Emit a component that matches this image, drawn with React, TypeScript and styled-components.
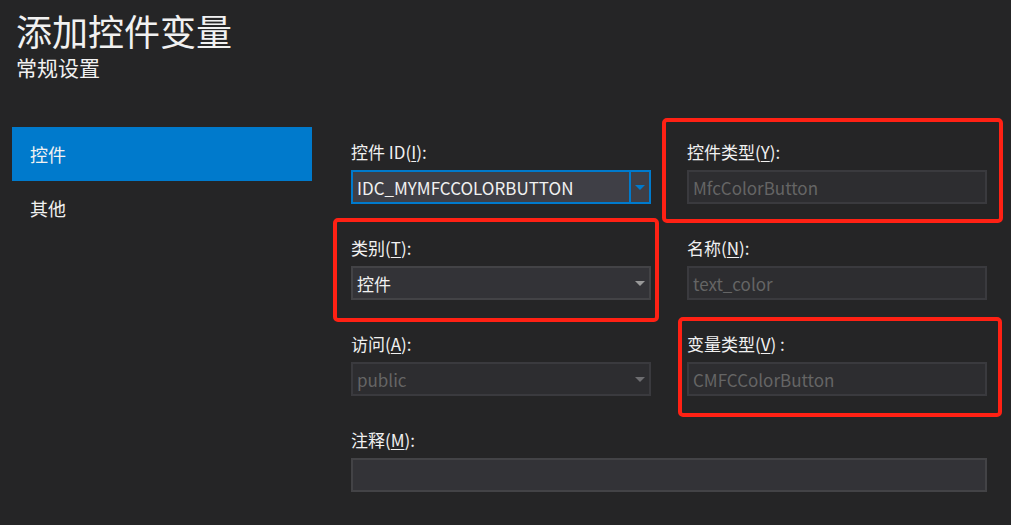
import styled, { createGlobalStyle } from 'styled-components';

const GlobalStyle = createGlobalStyle`
  html, body {
    margin: 0;
    padding: 0;
    background: #252526;
  }
  body {
    font-family: "Segoe UI", "Noto Sans CJK SC", sans-serif;
    color: #f1f1f1;
  }
`;

const Page = styled.div`
  position: relative;
  width: 1011px;
  height: 525px;
  overflow: hidden;
  background: #252526;
`;

const Header = styled.header`
  padding: 6px 0 0 16px;
`;

const Title = styled.h1`
  margin: 0;
  font-size: 36px;
  font-weight: 400;
  line-height: 48px;
  color: #f1f1f1;
`;

const Subtitle = styled.h2`
  margin: 0;
  font-size: 21px;
  font-weight: 400;
  line-height: 26px;
  color: #f1f1f1;
`;

const Body = styled.div`
  display: grid;
  grid-template-columns: 300px 636px;
  column-gap: 39px;
  padding: 47px 0 0 12px;
`;

const Nav = styled.nav`
  display: flex;
  flex-direction: column;
`;

const NavItem = styled.div<{ $active?: boolean }>`
  height: 54px;
  display: flex;
  align-items: center;
  padding-left: 18px;
  font-size: 18px;
  background: ${(p) => (p.$active ? '#007acc' : 'transparent')};
  color: #f1f1f1;
`;

const Form = styled.div`
  display: grid;
  grid-template-columns: 300px 300px;
  column-gap: 36px;
  row-gap: 32px;
  padding-top: 13px;
`;

const Field = styled.div<{ $wide?: boolean }>`
  display: flex;
  flex-direction: column;
  gap: 6px;
  grid-column: ${(p) => (p.$wide ? '1 / span 2' : 'auto')};
`;

const Label = styled.label`
  font-size: 17px;
  line-height: 24px;
  color: #f1f1f1;
  u {
    text-underline-offset: 2px;
  }
`;

const Box = styled.div<{ $variant: 'focus' | 'normal' | 'disabled' }>`
  box-sizing: border-box;
  height: 34px;
  display: flex;
  align-items: stretch;
  border: 2px solid
    ${(p) => (p.$variant === 'focus' ? '#007acc' : p.$variant === 'normal' ? '#434346' : '#3a3a3e')};
  background: ${(p) =>
    p.$variant === 'focus' ? '#3f3f46' : p.$variant === 'normal' ? '#333337' : '#2d2d30'};
  color: ${(p) => (p.$variant === 'disabled' ? '#656565' : '#f1f1f1')};
`;

const Value = styled.span`
  flex: 1;
  display: flex;
  align-items: center;
  padding-left: 4px;
  font-size: 17px;
  white-space: nowrap;
  overflow: hidden;
`;

const Arrow = styled.span<{ $focus?: boolean; $dim?: boolean }>`
  width: 18px;
  display: flex;
  align-items: center;
  justify-content: center;
  border-left: ${(p) => (p.$focus ? '2px solid #007acc' : 'none')};
  &::after {
    content: '';
    border-left: 5px solid transparent;
    border-right: 5px solid transparent;
    border-top: 5px solid ${(p) => (p.$focus ? '#007acc' : p.$dim ? '#6d6d70' : '#999999')};
  }
`;

const Highlight = styled.div`
  position: absolute;
  box-sizing: border-box;
  border: 4px solid #ff2114;
  border-radius: 5px;
  pointer-events: none;
`;

const App = () => {
  return (
    <Page>
      <GlobalStyle />
      <Header>
        <Title>添加控件变量</Title>
        <Subtitle>常规设置</Subtitle>
      </Header>
      <Body>
        <Nav>
          <NavItem $active>控件</NavItem>
          <NavItem>其他</NavItem>
        </Nav>
        <Form>
          <Field>
            <Label>控件 ID(<u>I</u>):</Label>
            <Box $variant="focus">
              <Value>IDC_MYMFCCOLORBUTTON</Value>
              <Arrow $focus />
            </Box>
          </Field>
          <Field>
            <Label>控件类型(<u>Y</u>):</Label>
            <Box $variant="disabled">
              <Value>MfcColorButton</Value>
            </Box>
          </Field>
          <Field>
            <Label>类别(<u>T</u>):</Label>
            <Box $variant="normal">
              <Value>控件</Value>
              <Arrow />
            </Box>
          </Field>
          <Field>
            <Label>名称(<u>N</u>):</Label>
            <Box $variant="disabled">
              <Value>text_color</Value>
            </Box>
          </Field>
          <Field>
            <Label>访问(<u>A</u>):</Label>
            <Box $variant="disabled">
              <Value>public</Value>
              <Arrow $dim />
            </Box>
          </Field>
          <Field>
            <Label>变量类型(<u>V</u>) :</Label>
            <Box $variant="disabled">
              <Value>CMFCColorButton</Value>
            </Box>
          </Field>
          <Field $wide>
            <Label>注释(<u>M</u>):</Label>
            <Box $variant="normal">
              <Value />
            </Box>
          </Field>
        </Form>
      </Body>
      <Highlight style={{ left: 662, top: 118, width: 341, height: 105 }} />
      <Highlight style={{ left: 333, top: 218, width: 326, height: 104 }} />
      <Highlight style={{ left: 678, top: 317, width: 324, height: 100 }} />
    </Page>
  );
};

export default App;
